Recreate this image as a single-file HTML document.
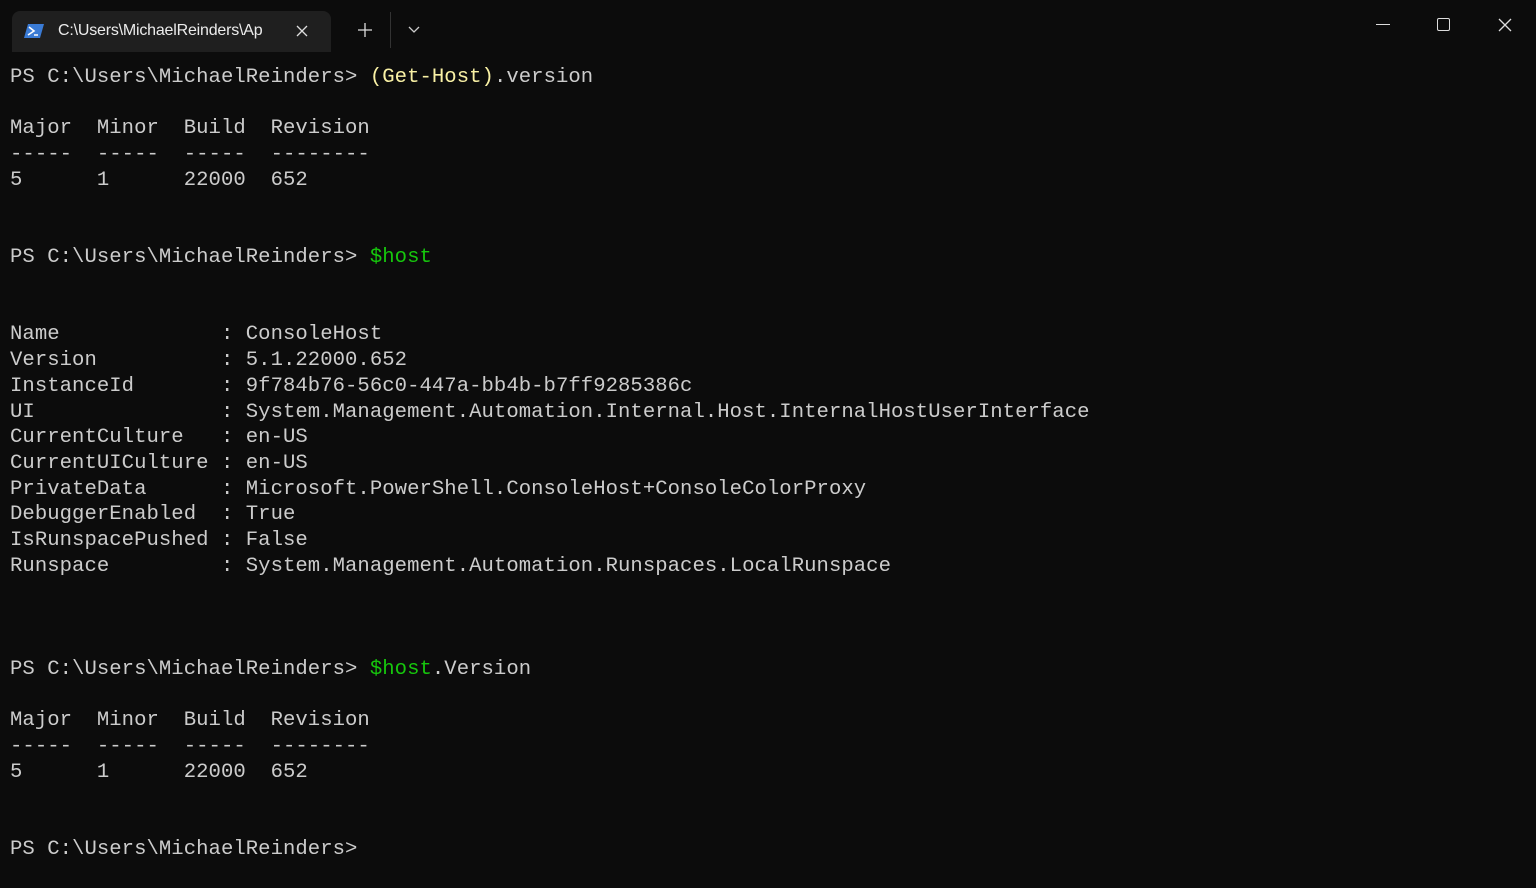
<!DOCTYPE html><html><head><style>
html,body{margin:0;padding:0;background:#0c0c0c;width:1536px;height:888px;overflow:hidden}
.tab{position:absolute;left:12px;top:11px;width:319px;height:41px;background:#1f1f1f;border-radius:8px 8px 0 0}
.tt{position:absolute;left:58px;top:22px;font:16px "Liberation Sans",sans-serif;color:#ececec;letter-spacing:-0.2px}
pre{position:absolute;left:10px;top:65px;margin:0;font:20.6px/25.73px "Liberation Mono",monospace;color:#cccccc;letter-spacing:0.05px}
.y{color:#f9f1a5}.g{color:#16c60c}
svg{position:absolute}
</style></head><body>
<div class="tab"></div>
<svg style="left:24px;top:23px" width="20" height="16"><polygon points="4,1 20,1 16,15 0,15" fill="#3a7bd5"/><path d="M5 4 L10 8 L4 12 M10 12 H14" stroke="#fff" stroke-width="1.6" fill="none"/></svg>
<div class="tt">C:\Users\MichaelReinders\Ap</div>
<svg style="left:295px;top:24px" width="14" height="14"><path d="M2 2L12 12M12 2L2 12" stroke="#ddd" stroke-width="1.3"/></svg>
<svg style="left:357px;top:22px" width="16" height="16"><path d="M8 1V15M1 8H15" stroke="#ddd" stroke-width="1.3"/></svg>
<div style="position:absolute;left:390px;top:12px;width:1px;height:36px;background:#333"></div>
<svg style="left:408px;top:26px" width="12" height="8"><path d="M1 1L6 6L11 1" stroke="#ccc" stroke-width="1.3" fill="none"/></svg>
<div style="position:absolute;left:1376px;top:24px;width:14px;height:1px;background:#ddd"></div>
<div style="position:absolute;left:1437px;top:18px;width:11px;height:11px;border:1.3px solid #ddd;border-radius:2px"></div>
<svg style="left:1498px;top:18px" width="14" height="14"><path d="M1 1L13 13M13 1L1 13" stroke="#ddd" stroke-width="1.3"/></svg>
<pre>PS C:\Users\MichaelReinders&gt; <span class="y">(Get-Host)</span>.version

Major  Minor  Build  Revision
-----  -----  -----  --------
5      1      22000  652


PS C:\Users\MichaelReinders&gt; <span class="g">$host</span>


Name             : ConsoleHost
Version          : 5.1.22000.652
InstanceId       : 9f784b76-56c0-447a-bb4b-b7ff9285386c
UI               : System.Management.Automation.Internal.Host.InternalHostUserInterface
CurrentCulture   : en-US
CurrentUICulture : en-US
PrivateData      : Microsoft.PowerShell.ConsoleHost+ConsoleColorProxy
DebuggerEnabled  : True
IsRunspacePushed : False
Runspace         : System.Management.Automation.Runspaces.LocalRunspace



PS C:\Users\MichaelReinders&gt; <span class="g">$host</span>.Version

Major  Minor  Build  Revision
-----  -----  -----  --------
5      1      22000  652


PS C:\Users\MichaelReinders&gt;</pre>
</body></html>
